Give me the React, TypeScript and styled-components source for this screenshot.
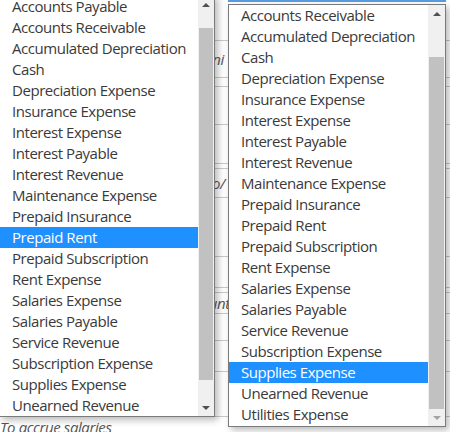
import { FC } from 'react';
import styled, { createGlobalStyle } from 'styled-components';

const ACCOUNTS = [
	'Accounts Payable',
	'Accounts Receivable',
	'Accumulated Depreciation',
	'Cash',
	'Depreciation Expense',
	'Insurance Expense',
	'Interest Expense',
	'Interest Payable',
	'Interest Revenue',
	'Maintenance Expense',
	'Prepaid Insurance',
	'Prepaid Rent',
	'Prepaid Subscription',
	'Rent Expense',
	'Salaries Expense',
	'Salaries Payable',
	'Service Revenue',
	'Subscription Expense',
	'Supplies Expense',
	'Unearned Revenue',
	'Utilities Expense',
];

// rows of the journal form that sits behind the open dropdowns
const FORM_ROWS = [
	{ h: 41 },
	{ h: 37, note: 'Admini' },
	{ h: 9 },
	{ h: 38 },
	{ h: 39 },
	{ h: 5 },
	{ h: 29, note: 'Memo/' },
	{ h: 59 },
	{ h: 31 },
	{ h: 5 },
	{ h: 21, note: 'Amount' },
	{ h: 27 },
	{ h: 31 },
	{ h: 45 },
];

const GlobalStyle = createGlobalStyle`
	body {
		margin: 0;
		background: #ffffff;
		overflow: hidden;
		font-family: 'Open Sans', 'Noto Sans', sans-serif;
	}
`;

const Stage = styled.div`
	position: relative;
	width: 450px;
	height: 432px;
	overflow: hidden;
	background: #ffffff;
`;

const Form = styled.div`
	display: flex;
	flex-direction: column;
`;

const FormRow = styled.div<{ $h: number }>`
	box-sizing: border-box;
	height: ${p => p.$h}px;
	border-bottom: 1px solid #c9c9c9;
	display: flex;
	align-items: center;
	padding-left: 180px;
`;

const Note = styled.span`
	font-style: italic;
	font-size: 15px;
	color: #555555;
	letter-spacing: -0.4px;
	white-space: nowrap;
`;

const LastRow = styled.div`
	line-height: 20px;
`;

const FocusedSelect = styled.div`
	position: absolute;
	left: 228px;
	top: -30px;
	width: 218px;
	height: 32px;
	box-sizing: border-box;
	border: 2px solid #5a9be0;
	background: #ffffff;
`;

const Popup = styled.div<{ $left: number; $top: number; $width: number }>`
	position: absolute;
	left: ${p => p.$left}px;
	top: ${p => p.$top}px;
	width: ${p => p.$width}px;
	box-sizing: border-box;
	display: flex;
	background: #ffffff;
	border: 1px solid #7a7a7a;
	box-shadow: 3px 3px 7px rgba(0, 0, 0, 0.28);
`;

const List = styled.ul`
	flex: 1;
	margin: 0;
	padding: 0;
	list-style: none;
`;

const Option = styled.li<{ $selected?: boolean }>`
	height: 21px;
	line-height: 21px;
	font-size: 15px;
	letter-spacing: -0.45px;
	white-space: nowrap;
	overflow: hidden;
	padding-left: 12px;
	color: ${p => (p.$selected ? '#ffffff' : '#3a3a3a')};
	background: ${p => (p.$selected ? '#1e90ff' : 'transparent')};
`;

const Scrollbar = styled.div<{ $width: number }>`
	width: ${p => p.$width}px;
	display: flex;
	flex-direction: column;
	background: #f0f0f0;
`;

const ArrowButton = styled.div`
	height: 17px;
	display: flex;
	align-items: center;
	justify-content: center;
`;

const Arrow = styled.span<{ $down?: boolean; $disabled?: boolean }>`
	width: 0;
	height: 0;
	border-left: 4px solid transparent;
	border-right: 4px solid transparent;
	${p =>
		p.$down
			? `border-top: 4px solid ${p.$disabled ? '#a3a3a3' : '#505050'};`
			: `border-bottom: 4px solid ${p.$disabled ? '#a3a3a3' : '#505050'};`}
`;

const Track = styled.div`
	flex: 1;
	display: flex;
	flex-direction: column;
	padding: 0 1px;
`;

const Thumb = styled.div<{ $offset: number }>`
	margin-top: ${p => p.$offset}px;
	height: 352px;
	background: #c1c1c1;
`;

type DropdownProps = {
	items: string[];
	selected: string;
	left: number;
	top: number;
	width: number;
	barWidth: number;
	thumbOffset: number;
	atEnd?: boolean;
};

const Dropdown: FC<DropdownProps> = ({
	items,
	selected,
	left,
	top,
	width,
	barWidth,
	thumbOffset,
	atEnd,
}) => (
	<Popup $left={left} $top={top} $width={width}>
		<List>
			{items.map(item => (
				<Option key={item} $selected={item === selected}>
					{item}
				</Option>
			))}
		</List>
		<Scrollbar $width={barWidth}>
			<ArrowButton>
				<Arrow />
			</ArrowButton>
			<Track>
				<Thumb $offset={thumbOffset} />
			</Track>
			<ArrowButton>
				<Arrow $down $disabled={atEnd} />
			</ArrowButton>
		</Scrollbar>
	</Popup>
);

export default function App() {
	return (
		<>
			<GlobalStyle />
			<Stage>
				<Form>
					{FORM_ROWS.map((row, i) => (
						<FormRow key={i} $h={row.h}>
							{row.note && <Note>{row.note}</Note>}
						</FormRow>
					))}
					<LastRow>
						<Note>To accrue salaries</Note>
					</LastRow>
				</Form>

				<Dropdown
					items={ACCOUNTS.slice(0, 20)}
					selected="Prepaid Rent"
					left={-1}
					top={-5}
					width={216}
					barWidth={16}
					thumbOffset={15}
				/>

				<FocusedSelect />
				<Dropdown
					items={ACCOUNTS.slice(1)}
					selected="Supplies Expense"
					left={228}
					top={4}
					width={218}
					barWidth={17}
					thumbOffset={35}
					atEnd
				/>
			</Stage>
		</>
	);
}
